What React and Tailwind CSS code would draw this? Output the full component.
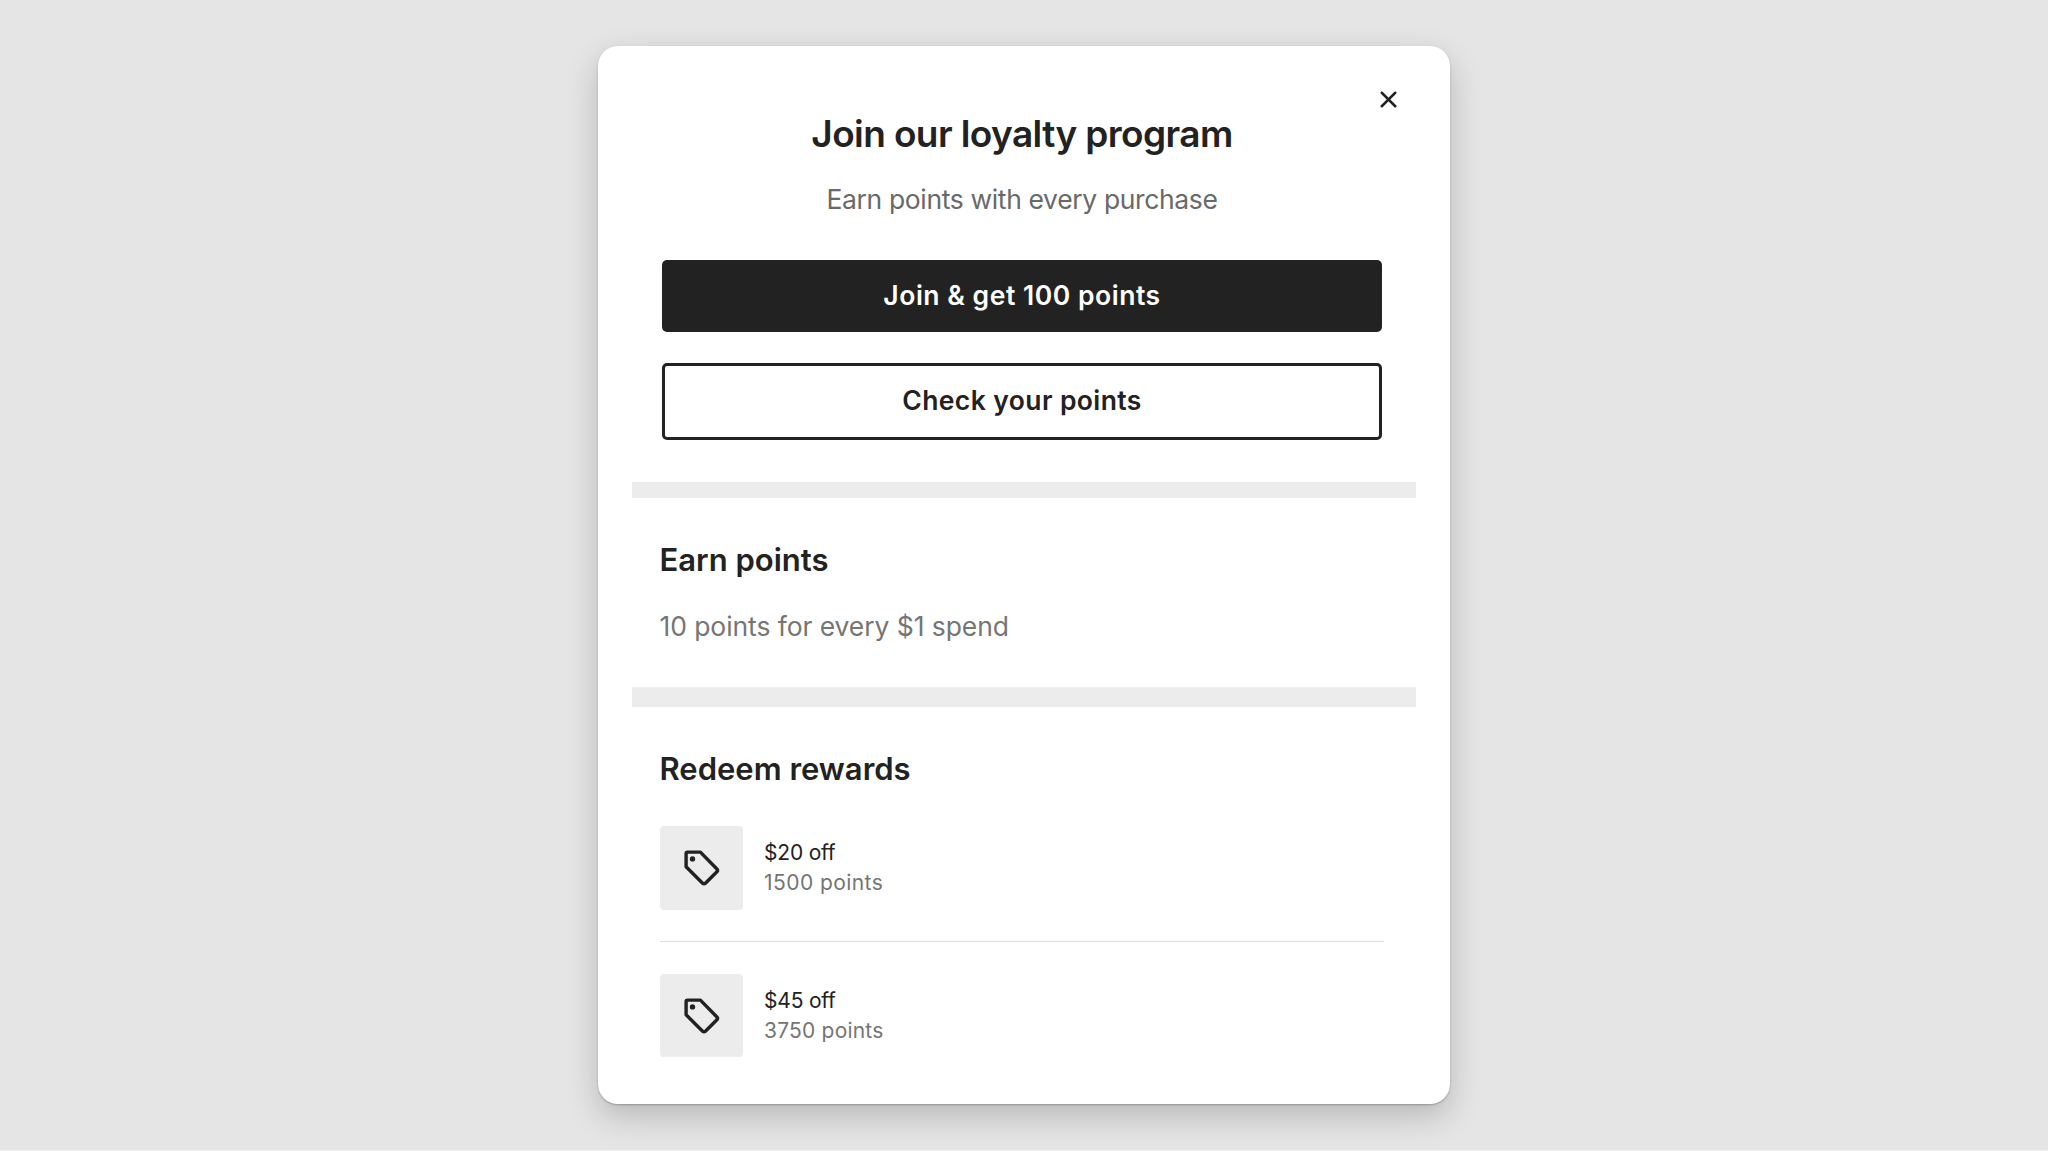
import React from 'react'
import { X } from 'lucide-react'

const rewards = [
    { title: '$20 off', points: '1500 points', tracking: 'tracking-[0.44px]' },
    { title: '$45 off', points: '3750 points', tracking: 'tracking-[0.2px]' },
]

function TagIcon() {
    return (
        <svg width="36" height="36" viewBox="0 0 36 36" fill="none" className="mt-px">
            <path
                d="M2.1 3.4 V16.8 L18.6 33.2 Q20 34.4 21.4 33.2 L32.9 21.8 Q34.2 20.4 32.9 19 L16.4 2.1 H3.4 Q2.1 2.1 2.1 3.4 Z"
                stroke="#222"
                strokeWidth="3.4"
                strokeLinejoin="round"
            />
            <circle cx="8.5" cy="8.9" r="2.7" fill="#222" />
        </svg>
    )
}

function Reward({ title, points, tracking }) {
    return (
        <div className="flex items-start">
            <div className="flex items-center justify-center w-[83px] h-[83.5px] rounded-[4px] bg-[#ececec]">
                <TagIcon />
            </div>
            <div className="ml-[21px] pt-[12px] text-[21px] leading-[30px]">
                <p className="text-[#222] tracking-[-0.2px]">{title}</p>
                <p className={`text-[#757575] ${tracking}`}>{points}</p>
            </div>
        </div>
    )
}

export default function App() {
    return (
        <div className="flex justify-center h-[1151px] pt-[46px] bg-[#e5e5e5] border-b border-[#f0f0f0] overflow-hidden font-['Inter','Liberation_Sans',sans-serif] text-[#222]">
            <div className="relative w-[852px] h-[1058px] rounded-[20px] bg-white shadow-[0_1px_2px_rgba(0,0,0,0.25),0_12px_32px_rgba(0,0,0,0.2)]">
                <button aria-label="Close" className="absolute right-[46px] top-[38px] p-[2px]">
                    <X size={27} strokeWidth={2.2} />
                </button>

                <div className="flex flex-col items-center pt-[63.5px] pl-[64px] pr-[68px]">
                    <h1 className="text-[37px] leading-[48px] font-semibold tracking-[-0.6px]">Join our loyalty program</h1>
                    <p className="mt-[21px] text-[26.5px] leading-[40px] tracking-[-0.36px] text-[#696969]">Earn points with every purchase</p>
                    <button className="mt-[41.5px] w-full h-[72px] pb-[1px] rounded-[5px] bg-[#222] text-white text-[26.5px] font-semibold tracking-[0.53px]">
                        Join &amp; get 100 points
                    </button>
                    <button className="mt-[31px] w-full h-[77px] pb-[1px] rounded-[5px] border-[3px] border-[#222] text-[26.5px] font-semibold tracking-[0.4px]">
                        Check your points
                    </button>
                </div>

                <div className="mt-[42px] mx-[34px] h-[16px] bg-[#ececec]"></div>

                <div className="px-[61.5px] pt-[42px]">
                    <h2 className="text-[31px] leading-[40px] font-semibold">Earn points</h2>
                    <p className="mt-[26px] text-[26.5px] leading-[40px] tracking-[-0.08px] text-[#757575]">10 points for every $1 spend</p>
                </div>

                <div className="mt-[41px] mx-[34px] h-[19.5px] bg-[#ececec]"></div>

                <div className="pl-[62px] pr-[66px] pt-[42.5px]">
                    <h2 className="-ml-[0.5px] text-[31px] leading-[40px] font-semibold">Redeem rewards</h2>
                    <div className="mt-[37px]">
                        <Reward {...rewards[0]} />
                        <div className="my-[31.5px] h-px bg-[#dedede]"></div>
                        <Reward {...rewards[1]} />
                    </div>
                </div>
            </div>
        </div>
    )
}
